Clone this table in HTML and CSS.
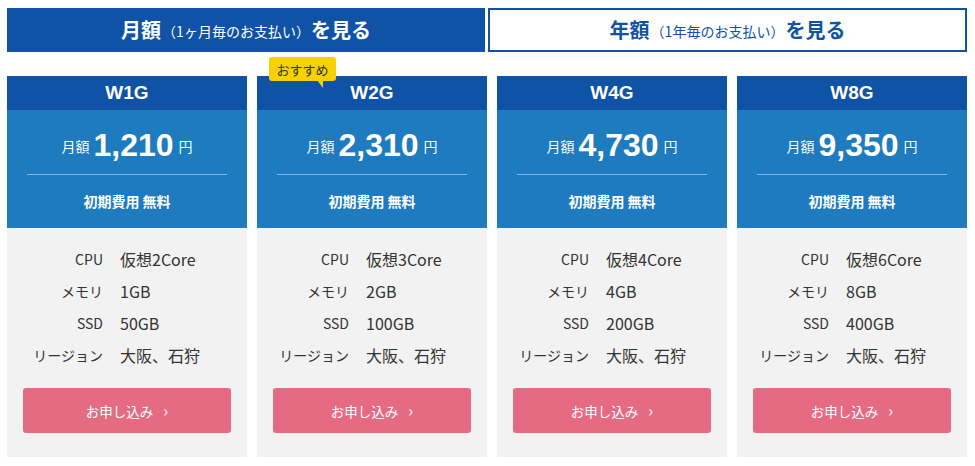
FILE: index.html
```html
<!DOCTYPE html>
<html lang="ja">
<head>
<meta charset="utf-8">
<link rel="stylesheet" href="styles.css">
</head>
<body>
<div class="page">
  <div class="tabs">
    <div class="tab tab-active"><b>月額</b><small>（1ヶ月毎のお支払い）</small><b>を見る</b></div>
    <div class="tab tab-idle"><b>年額</b><small>（1年毎のお支払い）</small><b>を見る</b></div>
  </div>
  <div class="plans">
    <div class="plan">
      <div class="plan-name">W1G</div>
      <div class="plan-price">
        <div class="price-line"><span class="pl">月額</span><span class="num">1,210</span><span class="pl">円</span></div>
        <div class="initial">初期費用 無料</div>
      </div>
      <div class="plan-body">
        <div class="specs">
          <span class="k">CPU</span><span class="v">仮想2Core</span>
          <span class="k">メモリ</span><span class="v">1GB</span>
          <span class="k">SSD</span><span class="v">50GB</span>
          <span class="k">リージョン</span><span class="v">大阪、石狩</span>
        </div>
        <a class="apply">お申し込み<span class="chev">›</span></a>
      </div>
    </div>
    <div class="plan">
      <div class="badge">おすすめ</div>
      <div class="plan-name">W2G</div>
      <div class="plan-price">
        <div class="price-line"><span class="pl">月額</span><span class="num">2,310</span><span class="pl">円</span></div>
        <div class="initial">初期費用 無料</div>
      </div>
      <div class="plan-body">
        <div class="specs">
          <span class="k">CPU</span><span class="v">仮想3Core</span>
          <span class="k">メモリ</span><span class="v">2GB</span>
          <span class="k">SSD</span><span class="v">100GB</span>
          <span class="k">リージョン</span><span class="v">大阪、石狩</span>
        </div>
        <a class="apply">お申し込み<span class="chev">›</span></a>
      </div>
    </div>
    <div class="plan">
      <div class="plan-name">W4G</div>
      <div class="plan-price">
        <div class="price-line"><span class="pl">月額</span><span class="num">4,730</span><span class="pl">円</span></div>
        <div class="initial">初期費用 無料</div>
      </div>
      <div class="plan-body">
        <div class="specs">
          <span class="k">CPU</span><span class="v">仮想4Core</span>
          <span class="k">メモリ</span><span class="v">4GB</span>
          <span class="k">SSD</span><span class="v">200GB</span>
          <span class="k">リージョン</span><span class="v">大阪、石狩</span>
        </div>
        <a class="apply">お申し込み<span class="chev">›</span></a>
      </div>
    </div>
    <div class="plan">
      <div class="plan-name">W8G</div>
      <div class="plan-price">
        <div class="price-line"><span class="pl">月額</span><span class="num">9,350</span><span class="pl">円</span></div>
        <div class="initial">初期費用 無料</div>
      </div>
      <div class="plan-body">
        <div class="specs">
          <span class="k">CPU</span><span class="v">仮想6Core</span>
          <span class="k">メモリ</span><span class="v">8GB</span>
          <span class="k">SSD</span><span class="v">400GB</span>
          <span class="k">リージョン</span><span class="v">大阪、石狩</span>
        </div>
        <a class="apply">お申し込み<span class="chev">›</span></a>
      </div>
    </div>
  </div>
</div>
</body>
</html>
```
FILE: styles.css
```css
* { box-sizing: border-box; }
html, body { margin: 0; padding: 0; background: #fff; }
body {
  font-family: "Noto Sans CJK JP", "Liberation Sans", sans-serif;
  color: #333;
}
.page { padding: 8px 8px 0 7px; width: 975px; height: 466px; overflow: hidden; }

.tabs {
  display: grid;
  grid-template-columns: 478px 479px;
  gap: 3px;
  height: 44px;
}
.tab {
  display: flex;
  align-items: center;
  justify-content: center;
  font-size: 20px;
  line-height: 1;
}
.tab b { font-weight: 700; }
.tab small { font-size: 14px; font-weight: 400; margin: 0 1px; position: relative; top: 1px; }
.tab-active { background: #1052a5; color: #fff; }
.tab-idle { background: #fff; border: 2px solid #1052a5; color: #1052a5; }

.plans {
  display: grid;
  grid-template-columns: 240px 230px 230px 230px;
  gap: 10px;
  margin-top: 24px;
}
.plan { position: relative; display: flex; flex-direction: column; }

.plan-name {
  background: #1052a5;
  color: #fff;
  height: 34px;
  display: flex;
  align-items: center;
  justify-content: center;
  font-family: "Liberation Sans", Arial, sans-serif;
  font-weight: 700;
  font-size: 19px;
}
.plan-price {
  background: #1e7bbf;
  color: #fff;
  height: 118px;
  padding: 0 20px;
  display: flex;
  flex-direction: column;
}
.price-line {
  height: 65px;
  border-bottom: 1px solid #84b8e0;
  display: flex;
  align-items: center;
  justify-content: center;
  padding-top: 6px;
}
.pl { font-size: 14px; position: relative; top: 1px; }
.num {
  font-family: "Liberation Sans", Arial, sans-serif;
  font-weight: 700;
  font-size: 32px;
  margin: 0 5px 0 4px;
}
.initial {
  flex: 1;
  display: flex;
  align-items: center;
  justify-content: center;
  font-size: 14px;
  font-weight: 700;
  padding-bottom: 2px;
}

.plan-body {
  background: #f2f2f2;
  height: 229px;
  padding: 15px 16px 0;
}
.specs {
  display: grid;
  grid-template-columns: 40% 1fr;
  line-height: 32px;
  margin: 0 -16px;
}
.k { text-align: right; font-size: 14px; color: #333; }
.v { padding-left: 17px; font-size: 16px; color: #333; }

.apply {
  display: flex;
  align-items: center;
  justify-content: center;
  margin-top: 17px;
  height: 45px;
  background: #e46b82;
  border-radius: 3px;
  color: #fff;
  font-size: 13.5px;
  cursor: pointer;
}
.chev { margin-left: 10px; font-size: 16px; line-height: 1; position: relative; top: -1px; }

.badge {
  position: absolute;
  left: 12px;
  top: -19px;
  width: 67px;
  height: 24px;
  background: #f8d200;
  border-radius: 3px;
  font-size: 13px;
  color: #333;
  display: flex;
  align-items: center;
  justify-content: center;
  z-index: 2;
}
.badge::after {
  content: "";
  position: absolute;
  left: 48px;
  top: 23px;
  border-right: 6px solid #f8d200;
  border-bottom: 8px solid transparent;
  border-left: 0;
}
```
